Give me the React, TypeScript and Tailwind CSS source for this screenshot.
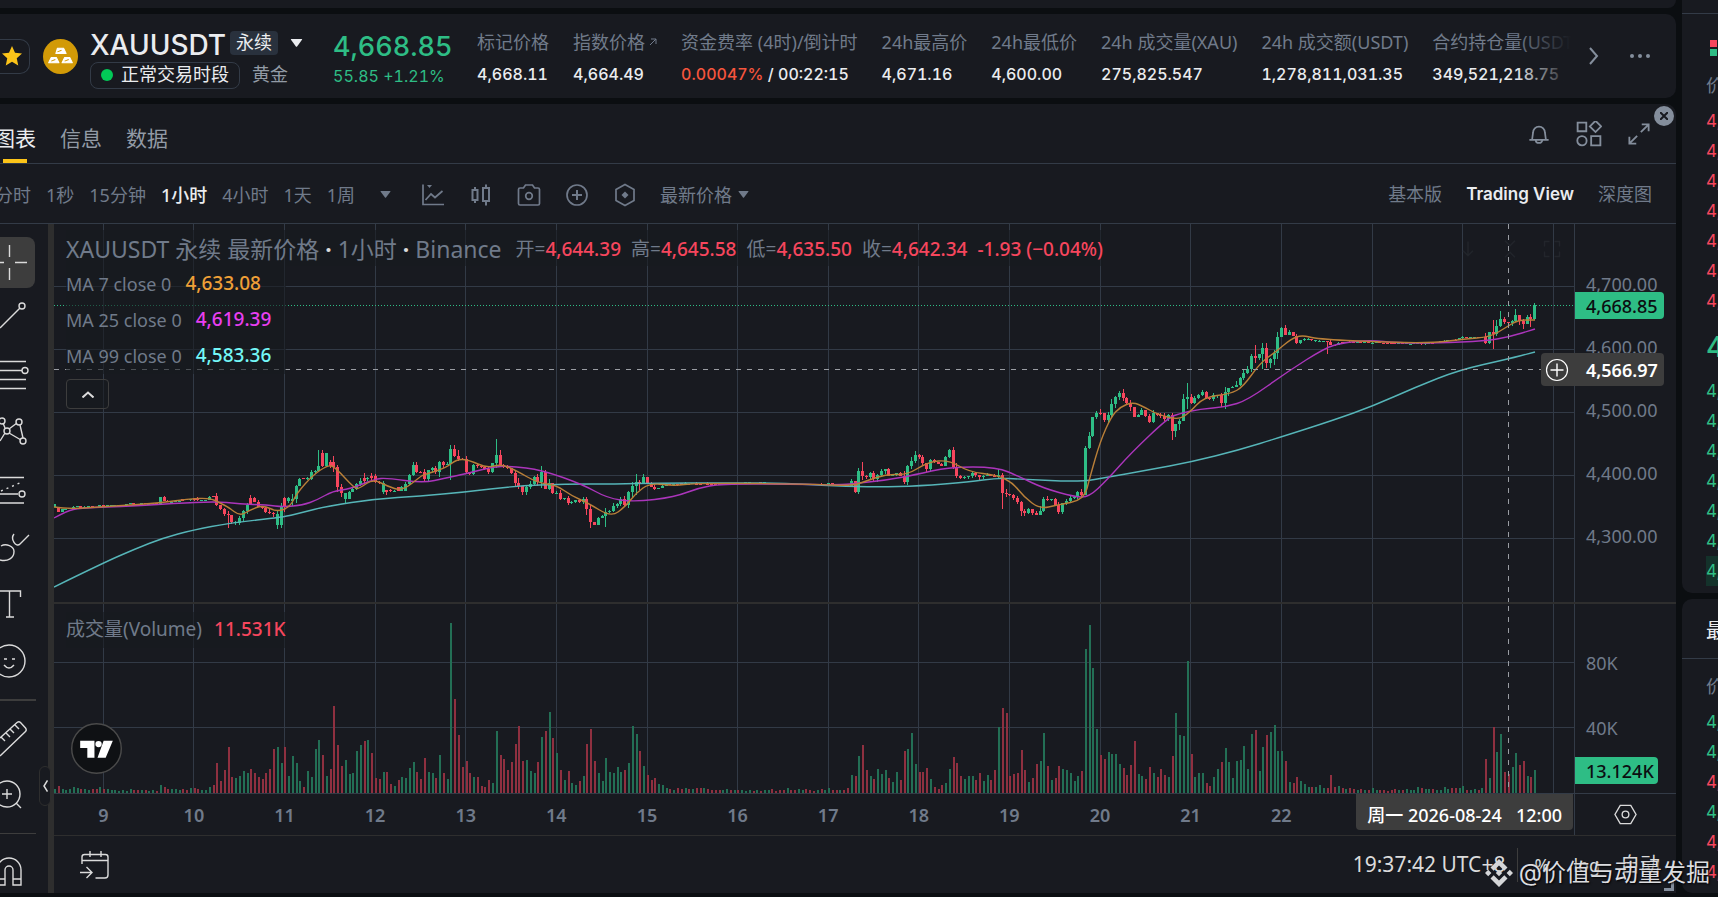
import type { ReactNode } from "react";

const PANE_W = 1520;
const STEP = 3.776;
const DAY = STEP * 24;
const FIRST_DAY_X = 49.3;
const GRID_X = Array.from({ length: 17 }, (_, i) => FIRST_DAY_X + i * DAY).filter((x) => x < PANE_W);
const DAYS = ["9", "10", "11", "12", "13", "14", "15", "16", "17", "18", "19", "20", "21", "22"];

// Hourly volume, bar height in px. Negative = the candle closed down.
const VOLUME = [
  4, -7, 4, 3, 4, 6, 5, -4, 4, 3, -4, -4, 6, -4, 4, 3, 3, 2, 3, 2, 4, -3, -3, 3, -3, 2, 3, -2, 8, -6, -4, 4, 4, 3, -4,
  -3, 5, -5, -4, 3, 3, 6, -8, -30, -12, -23, -46, -16, 15, 17, 22, 20, -24, -20, -16, -14, -20, -24, -44, 46, 30, -46,
  17, 37, 30, 12, -6, 22, 16, 44, 53, -38, 17, -24, -87, -48, -27, 33, 19, 20, 42, 48, -52, 53, -40, -15, -14, 21, -21,
  -9, 7, -13,
  16, 15, 25, 31, -21, -14, -35, 21, 20, -15, 38, -20, 14, 170, -94, -58, -26, -32, -20, 16, -16, -7, -6, -13, 10, 62,
  -38, -34, -23, -31, -49, -67, -32, 33, 22, 20, -31, 56, -62, 81, -55, 40, -23, 13, -22, 10, 8, -12, 17, -49, -64, -32,
  20, 12, 35, 21, 20, 26, 21, -23, 30, 67, 59, -42, 27, -18, -13, -15, 9, 8, 5, -4, 3, -5, -4, 5, -4, 4, -5, -5, 5, -4,
  -3, -3, -3, 3, 4, -3, 3, -3, 3, 2, 3, -2, 3, -2, 3, 3, -4, -2, -3, -3, 5, -3, -3, 4, 3, -4, -3, -2, 3, -4, 3, 5, -3,
  -3, 3, -3, -5, 18, -17, 37, -48, -23, 17, -14, 24, 19, 23, -15, 11, 21, -13, -42, 44, 60, 29, -21, -21, -25, 14, -6,
  -4, -8, 10, 24, -36, -30, -17, 14, 17, 17, -13, -20, 12, 18, -13, -23, 66, -85, -80, -17, -19, -20, -43, -23, 11, -15,
  -29, 32, 60, -27,
  13, -15, -27, 24, 23, 20, 12, 17, -22, 144, 168, 125, 64, -38, -34, 41, 39, 39, 29, -25, -18, -28, -52, 19, 17, -14,
  -26, 20, -16, -24, -18, 16, -37, 80, 58, 57, 132, -39, 16, 20, 20, -10, -7, 16, 24, -31, 45, 31, 15, 32, 33, 47, 24,
  59, -63, 22, 46, -58, 61, 68, 42, 42, -32, 11, -10, -16, 12, 9, 6, -6, 6, 8, 5, -5, -18, -6, 7, -5, 4, -5, -4, 3, -4,
  3, -3, 5, 3, -3, -3, -2, -3, -4, 3, -3, 4, 3, 3, 6, -5, 4, 4, -4, 3, 3, 6, 4, -5, -5, 5, 7, -3, 3, 4, -3, 5, -34, 15,
  -66, 41, 59, -21, -19, 26, 40, -28, -32, 17, -16, 23,
];

// Hourly close, y position inside the price pane.
const CLOSE = [
  283, 288, 285, 285, 284, 283, 282, 284, 283, 282, 283, 283, 281, 282, 281, 281, 281, 281, 281, 280, 279, 280, 281, 279,
  280, 280, 279, 280, 273, 277, 278, 278, 277, 277, 275, 275, 276, 274, 276, 276, 276, 273, 272, 281, 285, 290, 291, 298,
  299, 294, 287, 281, 274, 278, 283, 284, 288, 289, 290, 301, 283, 274, 277, 275, 262, 255, 254, 255, 248, 247, 242, 229,
  242, 238, 243, 263, 269, 275, 268, 265, 260, 257, 254, 254, 252, 258, 259, 268, 266, 267, 267, 263,
  267, 260, 251, 241, 248, 248, 255, 246, 244, 248, 238, 241, 240, 225, 232, 235, 235, 248, 250, 241, 242, 243, 245, 248,
  239, 231, 241, 243, 244, 249, 259, 262, 268, 263, 260, 253, 258, 248, 265, 259, 269, 269, 275, 274, 279, 278, 276, 278,
  275, 285, 298, 301, 294, 292, 288, 287, 282, 280, 275, 281, 268, 262, 258, 260, 253, 259, 263, 265, 264, 262, 260, 261,
  260, 261, 259, 260, 260, 259, 261, 260, 259, 261, 260, 260, 260, 259, 260, 260, 259, 259, 259, 258, 259, 259, 259, 258,
  259, 259, 260, 259, 259, 260, 259, 260, 260, 260, 261, 260, 260, 261, 260, 261, 260, 259, 261, 261, 260, 261, 262, 257,
  268, 247, 252, 253, 249, 255, 251, 247, 245, 252, 251, 249, 252, 258, 242, 237, 231, 233, 239, 245, 236, 238, 240, 242,
  233, 226, 243, 252, 254, 253, 252, 249, 251, 253, 252, 251, 252, 252, 251, 269, 270, 271, 274, 278, 287, 289, 285, 289,
  291, 287, 275, 276,
  275, 281, 288, 279, 277, 274, 273, 268, 271, 224, 212, 193, 189, 189, 196, 191, 180, 173, 169, 174, 179, 183, 193, 191,
  186, 192, 198, 189, 191, 192, 195, 191, 207, 200, 197, 175, 173, 179, 174, 171, 168, 174, 175, 171, 171, 179, 168, 164,
  163, 161, 154, 149, 145, 132, 134, 130, 124, 139, 135, 129, 113, 104, 111, 108, 112, 119, 116, 115, 115, 116, 117, 117,
  117, 118, 121, 121, 119, 118, 118, 119, 118, 118, 119, 118, 119, 119, 118, 119, 119, 119, 120, 119, 120, 119, 120, 120,
  119, 119, 120, 119, 119, 119, 118, 117, 117, 116, 117, 116, 114, 113, 113, 114, 113, 114, 113, 119, 108, 110, 102, 95,
  98, 99, 97, 91, 97, 100, 93, 95, 81,
];

// Long wicks, [high, low] by candle index.
const WICKS: Record<number, [number, number]> = {
  46: [287, 304], 70: [226, 248], 71: [226, 243], 105: [221, 256], 117: [215, 244], 146: [284, 303], 154: [250, 271],
  214: [238, 256], 251: [249, 285], 296: [189, 216], 300: [159, 185], 318: [121, 139], 320: [119, 145], 337: [117, 130],
  381: [96, 125], 383: [87, 103], 387: [85, 98], 391: [90, 103],
};

const MA7 =
  "0,283 13,285 46,283 106,279 133,275 156,274 166,279 174,283 186,292 196,286 209,281 223,288 236,283 243,269 259,251 274,241 281,243 301,265 306,264 319,255 333,262 348,267 366,253 369,251 392,244 403,235 415,236 433,244 447,240 461,246 484,259 502,261 518,272 534,279 557,293 571,283 582,269 596,259 621,262 640,259 759,260 798,262 812,257 833,250 853,251 874,238 895,236 915,248 943,251 959,259 970,273 986,285 1003,281 1030,276 1036,253 1046,218 1057,193 1066,183 1079,178 1090,183 1103,190 1124,196 1135,189 1150,173 1176,170 1189,163 1206,139 1224,126 1237,115 1248,111 1263,115 1323,118 1379,119 1410,115 1436,113 1451,104 1464,96 1481,96";
const MA25 =
  "0,294 13,287 26,284 79,282 159,277 186,280 213,281 229,283 249,281 263,276 279,267 296,265 321,255 333,254 369,259 392,254 415,249 438,243 456,242 488,246 530,261 553,274 580,278 621,273 644,264 667,260 732,260 787,261 805,259 833,256 860,251 895,243 943,243 966,253 989,264 1021,273 1035,273 1053,256 1077,229 1114,194 1124,190 1146,185 1172,183 1194,176 1233,148 1271,124 1288,119 1315,116 1344,119 1383,119 1431,117 1455,113 1481,105";
const MA99 =
  "0,363 49,339 81,325 109,314 139,306 176,299 230,293 246,289 274,282 321,275 366,272 412,268 461,262 511,260 562,260 603,259 667,259 727,259 782,262 824,263 865,262 915,258 943,254 966,255 1026,258 1055,253 1094,246 1137,238 1185,226 1227,213 1280,196 1319,182 1362,163 1405,146 1454,135 1481,128";

// Rounds the corners of a polyline by running quadratics between the segment midpoints.
function smooth(points: string) {
  const p = points.split(" ").map((s) => s.split(",").map(Number));
  let d = `M${p[0][0]} ${p[0][1]}`;
  for (let i = 1; i < p.length - 1; i++) {
    d += `Q${p[i][0]} ${p[i][1]} ${(p[i][0] + p[i + 1][0]) / 2} ${(p[i][1] + p[i + 1][1]) / 2}`;
  }
  return `${d}L${p[p.length - 1][0]} ${p[p.length - 1][1]}`;
}

function PriceChart() {
  return (
    <svg className="block h-[378px] w-full" viewBox="0 0 1520 378" preserveAspectRatio="none" aria-hidden="true">
      <g stroke="#323a46" shapeRendering="crispEdges">
        {GRID_X.map((x) => (
          <line key={x} x1={x} x2={x} y1="0" y2="378" />
        ))}
        {[62, 125, 188, 251, 314].map((y) => (
          <line key={y} x1="0" x2="1520" y1={y + 0.5} y2={y + 0.5} />
        ))}
      </g>
      <line x1="0" x2="1520" y1="81.5" y2="81.5" stroke="#2ebd85" strokeDasharray="1 2" shapeRendering="crispEdges" />
      <g shapeRendering="crispEdges">
        {CLOSE.map((close, i) => {
          const open = i ? CLOSE[i - 1] : close - 3;
          const top = Math.min(open, close);
          const bottom = Math.max(open, close);
          const x = Math.round(i * STEP);
          const reach = Math.min(Math.abs(VOLUME[i]) / 7, 6);
          const [high, low] = WICKS[i] ?? [
            top - reach * (((i * 37) % 11) / 10),
            bottom + reach * (((i * 53) % 13) / 12),
          ];
          return (
            <g key={i} fill={VOLUME[i] < 0 ? "#f6465d" : "#2ebd85"}>
              <rect x={x} y={high} width="1" height={Math.max(low - high, 1)} />
              <rect x={x - 1} y={top} width="3" height={Math.max(bottom - top, 1)} />
            </g>
          );
        })}
      </g>
      <g fill="none" strokeWidth="1.4">
        <path d={smooth(MA99)} stroke="#56b5b8" />
        <path d={smooth(MA25)} stroke="#ab35bb" />
        <path d={smooth(MA7)} stroke="#b97f38" />
      </g>
      <g stroke="#9a9da3" shapeRendering="crispEdges" strokeDasharray="5 6">
        <line x1="0" x2="1520" y1="145.5" y2="145.5" />
        <line x1="1454.5" x2="1454.5" y1="0" y2="378" />
      </g>
    </svg>
  );
}

function VolumeChart() {
  return (
    <svg className="block h-[189px] w-full" viewBox="0 0 1520 189" preserveAspectRatio="none" aria-hidden="true">
      <g stroke="#323a46" shapeRendering="crispEdges">
        {GRID_X.map((x) => (
          <line key={x} x1={x} x2={x} y1="0" y2="189" />
        ))}
        <line x1="0" x2="1520" y1="58.5" y2="58.5" />
        <line x1="0" x2="1520" y1="123.5" y2="123.5" />
      </g>
      <g shapeRendering="crispEdges">
        {VOLUME.map((v, i) => (
          <rect
            key={i}
            x={Math.round(i * STEP)}
            y={189 - Math.abs(v)}
            width="2"
            height={Math.abs(v)}
            fill={v < 0 ? "#8f3040" : "#236f55"}
          />
        ))}
      </g>
      <line x1="1454.5" x2="1454.5" y1="2" y2="189" stroke="#9a9da3" strokeDasharray="5 6" shapeRendering="crispEdges" />
    </svg>
  );
}

function Icon({ size = "h-6 w-6", children }: { size?: string; children: ReactNode }) {
  return (
    <svg className={size} viewBox="0 0 24 24" fill="none" stroke="currentColor" strokeWidth="1.7" aria-hidden="true">
      {children}
    </svg>
  );
}

function Caret({ className }: { className: string }) {
  return (
    <svg className={className} viewBox="0 0 12 8" fill="currentColor" aria-hidden="true">
      <path d="M.8 0h10.4q.8 0 .3.8L6.6 7.5q-.6.7-1.2 0L.5.8Q0 0 .8 0z" />
    </svg>
  );
}

// Drawn around y = 0, the vertical centre of the button.
const TOOLS: { name: string; art: ReactNode; active?: boolean }[] = [
  { name: "十字线", active: true, art: <path d="M9.5-17v12M9.5 6v12M0 .5h4M15 .5h12" /> },
  {
    name: "趋势线",
    art: (
      <>
        <path d="M0 9 20-11" />
        <circle cx="22" cy="-13" r="3" />
      </>
    ),
  },
  {
    name: "斐波那契回撤",
    art: (
      <>
        <path d="M0-14.5h26M0-5.5h22M0 3.5h26M0 12.5h26" />
        <circle cx="25" cy="-5.5" r="3" />
      </>
    ),
  },
  {
    name: "形态",
    art: (
      <>
        <path d="m3-10 2 5M9-4l8-6M20-8l3 13M9 0l12 7M5 0 0 8" />
        <circle cx="2" cy="-12" r="3" />
        <circle cx="19" cy="-11" r="3" />
        <circle cx="7" cy="-2" r="3" />
        <circle cx="23" cy="8" r="3" />
      </>
    ),
  },
  {
    name: "预测",
    art: (
      <>
        <path d="M0-12.5h24M0 4h18M0 13h24" />
        <path d="M1 1 22-8" strokeDasharray="2 4" />
        <circle cx="22" cy="4" r="3" />
      </>
    ),
  },
  {
    name: "画笔",
    art: <path d="M0 13C8 15 14 11 14 4.500 14-1 6-4 1-1M14-13C10-8 16 1 20-3L29-12" />,
  },
  { name: "文字", art: <path d="M0-13h20.500v6M9.500-13v26M6 13h8" /> },
  {
    name: "表情",
    art: (
      <>
        <circle cx="9" cy="0" r="16" />
        <path d="M4 4q5 6 10 0M4-2h3M12-2h3" />
      </>
    ),
  },
];

const MEASURE_TOOLS: { name: string; art: ReactNode; active?: boolean }[] = [
  {
    name: "测量",
    art: <path d="M0 0 17-15.500q2-1.500 3.500 0L25.500-10q1.500 2 0 3.500L0 18M15-13l4 4M10-9l4 4M6-5l4 4M1-1l4 4" />,
  },
  {
    name: "放大",
    art: (
      <>
        <circle cx="7" cy="-1" r="13" />
        <path d="M7-6v10M2-1h10M16 8l5 5" />
      </>
    ),
  },
];

function Tool({ name, art, active }: { name: string; art: ReactNode; active?: boolean }) {
  return (
    <button aria-label={name} className="flex h-[57px] w-[35px] shrink-0 items-center">
      <span className={active ? "block h-[51px] w-full rounded-r-lg bg-[#3d3d3d]" : "block h-[51px] w-full"}>
        <svg className="h-full w-full" viewBox="0 -25 35 51" fill="none" stroke="#dbdbdb" strokeWidth="1.4">
          {art}
        </svg>
      </span>
    </button>
  );
}

const STATS: { label: string; value: ReactNode; link?: boolean }[] = [
  { label: "标记价格", value: "4,668.11" },
  { label: "指数价格", value: "4,664.49", link: true },
  {
    label: "资金费率 (4时)/倒计时",
    value: (
      <>
        <span className="text-[#f6553d]">0.00047%</span> / 00:22:15
      </>
    ),
  },
  { label: "24h最高价", value: "4,671.16" },
  { label: "24h最低价", value: "4,600.00" },
  { label: "24h 成交量(XAU)", value: "275,825.547" },
  { label: "24h 成交额(USDT)", value: "1,278,811,031.35" },
  { label: "合约持仓量(USDT)", value: "349,521,218.75" },
];

function MarketHeader() {
  return (
    <header className="flex h-[84px] items-center rounded-r-[10px] bg-[#181a20] tabular-nums">
      <button
        aria-label="收藏"
        className="flex h-[35px] w-[30px] shrink-0 items-center rounded-r-[10px] border border-l-0 border-[#333b47] pl-0.5 text-[#fcc419]"
      >
        <svg className="h-5 w-5" viewBox="0 0 24 24" fill="currentColor">
          <path d="m12 0 3.600 8.200 8.400.9-6.300 5.700 1.800 8.500L12 19l-7.500 4.300 1.800-8.500L0 9.100l8.400-.9z" />
        </svg>
      </button>
      <svg className="ml-[13px] h-[35px] w-[35px] shrink-0" viewBox="0 0 34 34" aria-hidden="true">
        <circle cx="17" cy="17" r="17" fill="#d29a07" />
        <g fill="#fff" stroke="#fff" strokeLinejoin="round">
          <path d="M14 9h6l2.500 5h-10zM8 18h5l2.500 5h-10zM21 18h5l2.500 5h-10z" />
        </g>
        <path d="m14 12.500 4-1.500M8 21.500l4-1.500M21 21.500l4-1.500" stroke="#d29a07" />
      </svg>
      <div className="ml-3 flex shrink-0 flex-col pt-1.5">
        <h1 className="flex h-7 items-center text-[28px] font-medium text-[#eaecef]">
          <span className="pt-1">XAUUSDT</span>
          <span className="ml-1 flex h-6 items-center rounded bg-[#29313d] px-1.5 text-lg font-normal">永续</span>
          <button aria-label="选择交易对" className="ml-3">
            <Caret className="h-2 w-[13px]" />
          </button>
        </h1>
        <div className="mt-1 flex items-center text-lg">
          <span className="flex h-[27px] items-center gap-2 rounded-lg border border-[#333b47] px-2.5 text-[#eaecef]">
            <i className="h-3 w-3 rounded-full bg-[#02c957]" />
            正常交易时段
          </span>
          <span className="ml-3 text-[#929aa5]">黄金</span>
        </div>
      </div>
      <div className="ml-[30px] w-[120px] shrink-0 pt-1.5 text-[#2ebd85]">
        <div className="h-[34px] text-[27px] leading-[34px] font-medium">4,668.85</div>
        <div className="h-6 text-base leading-6">55.85 +1.21%</div>
      </div>
      <div className="relative ml-6 min-w-0 flex-1 overflow-hidden pt-1">
        <dl className="flex gap-6 whitespace-nowrap">
          {STATS.map((s) => (
            <div key={s.label}>
              <dt className="flex h-7 items-center font-['Noto_Sans','Noto_Sans_CJK_SC',sans-serif] text-lg leading-7 text-[#707a8a]">
                {s.link ? (
                  <a href="#index" className="flex items-center gap-1">
                    {s.label}
                    <svg className="h-2 w-2" viewBox="0 0 8 8" fill="none" stroke="currentColor">
                      <path d="m1 7 6-6M2 1h5v5" />
                    </svg>
                  </a>
                ) : (
                  s.label
                )}
              </dt>
              <dd className="mt-1 h-7 text-base leading-7 font-medium text-[#eaecef]">{s.value}</dd>
            </div>
          ))}
        </dl>
        <div className="absolute inset-y-0 right-0 w-14 bg-linear-to-r from-transparent to-[#181a20]" />
      </div>
      <button aria-label="下一项" className="ml-2.5 text-[#848e9c]">
        <Icon>
          <path d="m9 4 7 8-7 8" strokeWidth="2" />
        </Icon>
      </button>
      <button aria-label="更多" className="mr-6 ml-[23px] text-[#848e9c]">
        <Icon>
          <g fill="currentColor" stroke="none">
            <circle cx="4" cy="12" r="2" />
            <circle cx="12" cy="12" r="2" />
            <circle cx="20" cy="12" r="2" />
          </g>
        </Icon>
      </button>
    </header>
  );
}

function Tabs() {
  return (
    <div className="relative flex h-[60px] items-center justify-between border-b border-[#333b47]">
      <nav className="-ml-1.5 flex h-full gap-6 text-[21px] text-[#929aa5]">
        <button className="relative h-full pt-2.5 text-[#eaecef]">
          图表
          <span className="absolute bottom-0 left-[9px] h-1 w-6 bg-[#fcc419]" />
        </button>
        <button className="h-full pt-2.5">信息</button>
        <button className="h-full pt-2.5">数据</button>
      </nav>
      <div className="mr-[26px] flex items-center gap-[26px] text-[#848e9c]">
        <button aria-label="提醒">
          <Icon size="h-[22px] w-[22px]">
            <path d="M1.500 18.500h21M4.500 18l1-7.500a6.500 6.500 0 0 1 13 0l1 7.500M8.500 19a3.500 2.800 0 0 0 7 0" strokeWidth="1.9" />
          </Icon>
        </button>
        <button aria-label="布局">
          <Icon size="h-[26px] w-[26px]">
            <path d="M1.500 1.500h8v8h-8zM18-.2 23.200 5 18 10.200 12.800 5zM14 14h8.500v8.500H14z" />
            <circle cx="5.500" cy="18.200" r="4.300" />
          </Icon>
        </button>
        <button aria-label="全屏">
          <Icon size="h-[22px] w-[22px]">
            <path d="m14 10 7.500-7.500M15 1.500h7.500V9M10 14l-7.500 7.500M1.500 15v7.500H9" strokeWidth="2" />
          </Icon>
        </button>
      </div>
      <button
        aria-label="关闭"
        className="absolute top-0.5 right-0.5 flex h-5 w-5 items-center justify-center rounded-full bg-[#848e9c] text-[#181a20]"
      >
        <svg className="h-2 w-2" viewBox="0 0 8 8" stroke="currentColor" strokeWidth="2">
          <path d="m0 0 8 8M8 0 0 8" />
        </svg>
      </button>
    </div>
  );
}

function IntervalBar() {
  return (
    <div className="flex h-[60px] items-center justify-between border-b border-[#333b47] pt-0.5 text-lg text-[#707a8a]">
      <div className="-ml-[5px] flex items-center gap-[15px] font-['Noto_Sans','Noto_Sans_CJK_SC',sans-serif]">
        {["分时", "1秒", "15分钟", "1小时", "4小时", "1天", "1周"].map((t) => (
          <button key={t} className={t === "1小时" ? "font-medium text-[#eaecef]" : ""}>
            {t}
          </button>
        ))}
        <button aria-label="更多周期" className="ml-2.5">
          <Caret className="h-[7px] w-[11px]" />
        </button>
        <div className="ml-[15px] flex items-center gap-6">
          <button aria-label="指标">
            <Icon>
              <path d="M2 1.500v20h21M4.500 17l5.500-6 4 3.500L21.500 8" />
              <path d="M6 2h5L8.500 5z" fill="currentColor" stroke="none" />
            </Icon>
          </button>
          <button aria-label="K线样式">
            <Icon>
              <path d="M3.500 7h5v10h-5zM14 5h6v13h-6zM6 4v3M6 17v3M17 1.500V5M17 18v4.500" strokeWidth="2" />
            </Icon>
          </button>
          <button aria-label="截图">
            <Icon>
              <path d="M1.500 6.500q0-1.500 1.500-1.500h3.500L8.500 2h7l2 3H21q1.500 0 1.500 1.500v14q0 1.500-1.500 1.500H3q-1.500 0-1.500-1.500z" />
              <circle cx="12" cy="13" r="3.300" />
            </Icon>
          </button>
          <button aria-label="添加">
            <Icon>
              <circle cx="12" cy="12" r="10" />
              <path d="M12 7v10M7 12h10" strokeWidth="2" />
            </Icon>
          </button>
          <button aria-label="设置">
            <Icon>
              <path d="M12 1.500 21 6.500v11l-9 5-9-5v-11z" />
              <path d="m12 8.500 3.500 3.500-3.500 3.500L8.500 12z" fill="currentColor" stroke="none" />
            </Icon>
          </button>
        </div>
        <button className="ml-2 flex items-center gap-1.5">
          最新价格
          <Caret className="h-[7px] w-[11px]" />
        </button>
      </div>
      <div className="mr-6 flex items-center gap-6">
        <button>基本版</button>
        <button className="text-[17px] font-semibold text-[#eaecef]">Trading View</button>
        <button>深度图</button>
      </div>
    </div>
  );
}

const MA_ROWS = [
  { name: "MA 7 close 0", value: "4,633.08", color: "text-[#f0a037]" },
  { name: "MA 25 close 0", value: "4,619.39", color: "text-[#e83ff0]" },
  { name: "MA 99 close 0", value: "4,583.36", color: "text-[#74f7f7]" },
];

const OHLC = [
  ["开", "4,644.39"],
  ["高", "4,645.58"],
  ["低", "4,635.50"],
  ["收", "4,642.34"],
];

function ChartLegend() {
  return (
    <div className="absolute top-1.5 left-3 text-[19px] text-[#707a8a]">
      <div className="flex h-9 items-center gap-3.5 bg-[#181a20]/60 pt-1 whitespace-nowrap">
        <span className="text-[23px]">
          XAUUSDT 永续 最新价格 <b className="text-[#dbdbdb]">·</b> 1小时 <b className="text-[#dbdbdb]">·</b> Binance
        </span>
        <span className="flex gap-2.5">
          {OHLC.map(([k, v]) => (
            <span key={k}>
              {k}=<span className="font-medium text-[#f6465d]">{v}</span>
            </span>
          ))}
          <span className="font-medium text-[#f6465d]">-1.93 (−0.04%)</span>
        </span>
      </div>
      {MA_ROWS.map((m) => (
        <div key={m.name} className="flex h-9 w-[220px] items-center gap-3.5 bg-[#181a20]/60">
          <span className="text-lg">{m.name}</span>
          <span className={`font-medium ${m.color}`}>{m.value}</span>
        </div>
      ))}
      <button
        aria-label="收起图例"
        className="mt-[5px] flex h-[30px] w-[43px] items-center justify-center rounded border border-[#3d3d3d] bg-[#181a20]/60"
      >
        <svg className="h-[7px] w-3" viewBox="0 0 12 7" fill="none" stroke="#dbdbdb" strokeWidth="2">
          <path d="m.5 6.500 5.500-5 5.500 5" />
        </svg>
      </button>
    </div>
  );
}

function TradingViewMark() {
  return (
    <a href="#tradingview" aria-label="TradingView" className="absolute bottom-[19px] left-[17px] block h-[51px] w-[51px]">
      <svg viewBox="0 0 50 50" className="h-full w-full">
        <circle cx="25" cy="25" r="24.300" fill="#0f1114" stroke="#4a4a4a" strokeWidth="1.400" />
        <g fill="#fff">
          <path d="M9 17.500h14V34h-7v-9.500H9zM32 17.500h9L34 34h-8z" />
          <circle cx="27" cy="20.700" r="3.100" />
        </g>
      </svg>
    </a>
  );
}

function ChartArea() {
  return (
    <div className="flex">
      <aside className="-mb-3 flex w-12 shrink-0 flex-col overflow-hidden pt-2.5">
        {TOOLS.map((t) => (
          <Tool key={t.name} {...t} />
        ))}
        <hr className="my-[9px] w-9 border-t-2 border-[#3d3d3d]" />
        {MEASURE_TOOLS.map((t) => (
          <Tool key={t.name} {...t} />
        ))}
        <hr className="my-[9px] w-9 border-[#3d3d3d]" />
        <Tool name="磁铁" art={<path d="M-3 14V-1A12 12 0 0 1 21-1V14H13V-1A4 4 0 0 0 5-1V14H-3M-3 8h8M13 8h8" />} />
      </aside>
      <div className="relative w-1.5 shrink-0 bg-[#2e2e2e]">
        <button
          aria-label="隐藏绘图工具"
          className="absolute bottom-[87px] -left-[9px] flex h-10 w-3 items-center justify-center rounded-md border border-[#2e2e2e] bg-[#181a20]"
        >
          <svg className="h-3 w-[5px]" viewBox="0 0 5 12" fill="none" stroke="#dbdbdb" strokeWidth="1.500">
            <path d="M4.500.5 1 6l3.500 5.500" />
          </svg>
        </button>
      </div>

      <div className="min-w-0 flex-1 font-['Noto_Sans','Noto_Sans_CJK_SC',sans-serif] text-lg text-[#707a8a]">
        <div className="relative flex">
          <div className="relative min-w-0 flex-1">
            <PriceChart />
            <ChartLegend />
            <div className="absolute top-[15px] right-3 flex gap-[22px] text-[#22252b]">
              <Icon size="h-5 w-5">
                <path d="M12 3v17M6 14l6 6 6-6" />
              </Icon>
              <Icon size="h-5 w-5">
                <path d="m6 2 6 6 6-6M6 22l6-6 6 6" />
              </Icon>
              <Icon size="h-5 w-5">
                <path d="M9 3H3v6M15 3h6v6M9 21H3v-6M15 21h6v-6" />
              </Icon>
            </div>
          </div>
          <div className="w-[102px] shrink-0 border-l border-[#333b47] pt-7 pl-[11px]">
            {["4,700.00", "4,600.00", "4,500.00", "4,400.00", "4,300.00"].map((p) => (
              <div key={p} className="flex h-[63px] items-center">
                {p}
              </div>
            ))}
          </div>
          <div className="absolute top-[68px] right-3 flex h-[27px] w-[89px] items-center rounded-r-sm bg-[#2ebd85] pl-[11px] font-medium text-[#0b0e11]">
            4,668.85
          </div>
          <div className="absolute top-[129px] right-3 flex h-[33px] w-[123px] items-center gap-[17px] rounded-sm bg-[#3d3d3d] pl-1 font-semibold text-white">
            <button aria-label="添加提醒">
              <Icon size="h-[24px] w-[24px]">
                <circle cx="12" cy="12" r="10.500" strokeWidth="1.200" />
                <path d="M12 5.500v13M5.500 12h13" strokeWidth="1.400" />
              </Icon>
            </button>
            4,566.97
          </div>
        </div>

        <div className="relative flex border-t-2 border-[#2e2e2e]">
          <div className="relative min-w-0 flex-1">
            <VolumeChart />
            <div className="absolute top-2 left-3 flex h-9 items-center gap-3 bg-[#181a20]/60 text-[19px]">
              <span>成交量(Volume)</span>
              <span className="font-medium text-[#f6465d]">11.531K</span>
            </div>
            <TradingViewMark />
          </div>
          <div className="w-[102px] shrink-0 border-l border-[#333b47] pt-[26px] pl-[11px]">
            {["80K", "40K"].map((p) => (
              <div key={p} className="flex h-[65px] items-center">
                {p}
              </div>
            ))}
          </div>
          <div className="absolute right-[18px] bottom-[9px] flex h-[27px] w-[83px] items-center rounded-r-sm bg-[#2ebd85] pl-[11px] font-medium text-[#0b0e11]">
            13.124K
          </div>
        </div>

        <div className="flex h-[42px] border-t border-[#333b47]">
          <div className="relative flex min-w-0 flex-1 items-center overflow-hidden font-semibold">
            <div className="shrink-0" style={{ width: `${((FIRST_DAY_X - DAY / 2) / PANE_W) * 100}%` }} />
            {DAYS.map((d) => (
              <div key={d} className="shrink-0 text-center" style={{ width: `${(DAY / PANE_W) * 100}%` }}>
                {d}
              </div>
            ))}
            <div className="absolute top-0 right-px flex h-9 items-center gap-3.5 rounded-b-sm bg-[#3d3d3d] px-[11px] pt-1.5 font-medium whitespace-nowrap text-white">
              <span>周一 2026-08-24</span>
              <span>12:00</span>
            </div>
          </div>
          <div className="flex w-[102px] shrink-0 items-center justify-center border-l border-[#333b47] text-[#dbdbdb]">
            <button aria-label="坐标设置">
              <Icon size="h-[23px] w-[23px]">
                <path d="M6.500 2.500h11L23 12l-5.500 9.500h-11L1 12z" strokeWidth="1.400" />
                <circle cx="12" cy="12" r="3.500" strokeWidth="1.400" />
              </Icon>
            </button>
          </div>
        </div>

        <div className="relative flex h-[58px] items-center justify-between border-t border-[#2e2e2e] text-[#dbdbdb]">
          <button aria-label="前往日期" className="ml-[26px]">
            <svg className="h-[28px] w-[30px]" viewBox="0 0 30 28" fill="none" stroke="currentColor" strokeWidth="1.400">
              <path d="M2 13V6q0-2.500 2.500-2.500h21Q28 3.500 28 6v18q0 3-3 3h-9.500M2 9.500h26M10 0v6M21 0v6M0 21.500h11.500M6.500 16l5.500 5.500L6.500 27" />
            </svg>
          </button>
          <div className="mr-4 flex items-center">
            <button className="text-[21px]">19:37:42 UTC+8</button>
            <span className="ml-3 h-[34px] w-px bg-[#3d3d3d]" />
            <button className="ml-4">%</button>
            <button className="ml-6">log</button>
            <button className="ml-5 text-xl">自动</button>
          </div>
          <span className="absolute right-0.5 bottom-0.5 h-2.5 w-2.5 border-r-3 border-b-3 border-[#848e9c]" />
        </div>
      </div>
    </div>
  );
}

const ASKS = ["4,669.60", "4,669.49", "4,669.38", "4,669.27", "4,669.16", "4,669.05", "4,668.94"];
const BIDS = ["4,668.85", "4,668.74", "4,668.63", "4,668.52", "4,668.41", "4,668.30", "4,668.19"];
const TRADES = [
  { price: "4,668.85", up: true },
  { price: "4,668.84", up: true },
  { price: "4,668.80", up: false },
  { price: "4,668.86", up: true },
  { price: "4,668.79", up: false },
  { price: "4,668.78", up: false },
];

function OrderColumn() {
  return (
    <aside className="flex w-9 shrink-0 flex-col gap-1.5 overflow-hidden text-[17px] whitespace-nowrap">
      <section className="h-[593px] overflow-hidden rounded-bl-[10px] bg-[#181a20]">
        <div className="h-3.5 border-b border-[#333b47]" />
        <button aria-label="盘口" className="mt-[26px] ml-7 flex flex-col gap-0.5">
          <i className="h-[7px] w-[7px] bg-[#f6465d]" />
          <i className="h-[7px] w-[7px] bg-[#2ebd85]" />
        </button>
        <table className="mt-2.5 ml-6">
          <thead>
            <tr className="h-10 text-left text-[#707a8a]">
              <th className="p-0 text-lg font-normal">价格(USDT)</th>
            </tr>
          </thead>
          <tbody>
            {ASKS.map((p) => (
              <tr key={p} className="h-[30px] text-[#f6465d]">
                <td className="p-0 pt-0.5">{p}</td>
              </tr>
            ))}
            <tr className="h-[60px] text-[28px] font-medium text-[#2ebd85]">
              <td className="p-0 pt-0.5">4,668.85</td>
            </tr>
            {BIDS.map((p) => (
              <tr key={p} className="h-[30px] text-[#2ebd85] last:bg-[#14322b]">
                <td className="p-0 pt-0.5">{p}</td>
              </tr>
            ))}
          </tbody>
        </table>
      </section>
      <section className="min-h-[294px] rounded-l-[10px] bg-[#181a20]">
        <h2 className="flex h-[60px] items-center border-b border-[#333b47] pt-1 pl-6 text-xl text-[#eaecef]">最新成交</h2>
        <table className="mt-2 ml-6">
          <thead>
            <tr className="h-10 text-left text-[#707a8a]">
              <th className="p-0 text-lg font-normal">价格(USDT)</th>
            </tr>
          </thead>
          <tbody>
            {TRADES.map((t) => (
              <tr key={t.price} className={t.up ? "h-[30px] text-[#2ebd85]" : "h-[30px] text-[#f6465d]"}>
                <td className="p-0 pt-0.5">{t.price}</td>
              </tr>
            ))}
          </tbody>
        </table>
      </section>
    </aside>
  );
}

export default function App() {
  return (
    <div className="relative flex min-h-screen gap-1.5 overflow-hidden bg-[#0b0e11] pb-1 font-['Inter','Noto_Sans_CJK_SC',sans-serif]">
      <main className="flex min-w-0 flex-1 flex-col gap-1.5">
        <div className="h-2 rounded-br-[10px] bg-[#181a20]" />
        <MarketHeader />
        <section className="flex-1 rounded-tr-[10px] bg-[#181a20]">
          <Tabs />
          <IntervalBar />
          <ChartArea />
        </section>
      </main>
      <OrderColumn />
      <div className="pointer-events-none absolute right-2 bottom-2 flex items-center gap-1.5 text-2xl text-[#dcdde0] text-shadow-[1px_1px_2px_#000]">
        <svg className="h-7 w-7" viewBox="0 0 28 28" fill="#d5d6d8" aria-hidden="true">
          <path d="m14 0 8.500 8.500-3.200 3.200L14 6.400l-5.300 5.300-3.200-3.200zM14 28l8.500-8.500-3.200-3.200-5.300 5.300-5.300-5.300-3.200 3.200zM14 10.800l3.200 3.200-3.200 3.200-3.200-3.200zM3.200 10.800 6.400 14l-3.200 3.200L0 14zM24.800 10.800 28 14l-3.200 3.200-3.200-3.200z" />
        </svg>
        <span>@价值与动量发掘</span>
      </div>
    </div>
  );
}
